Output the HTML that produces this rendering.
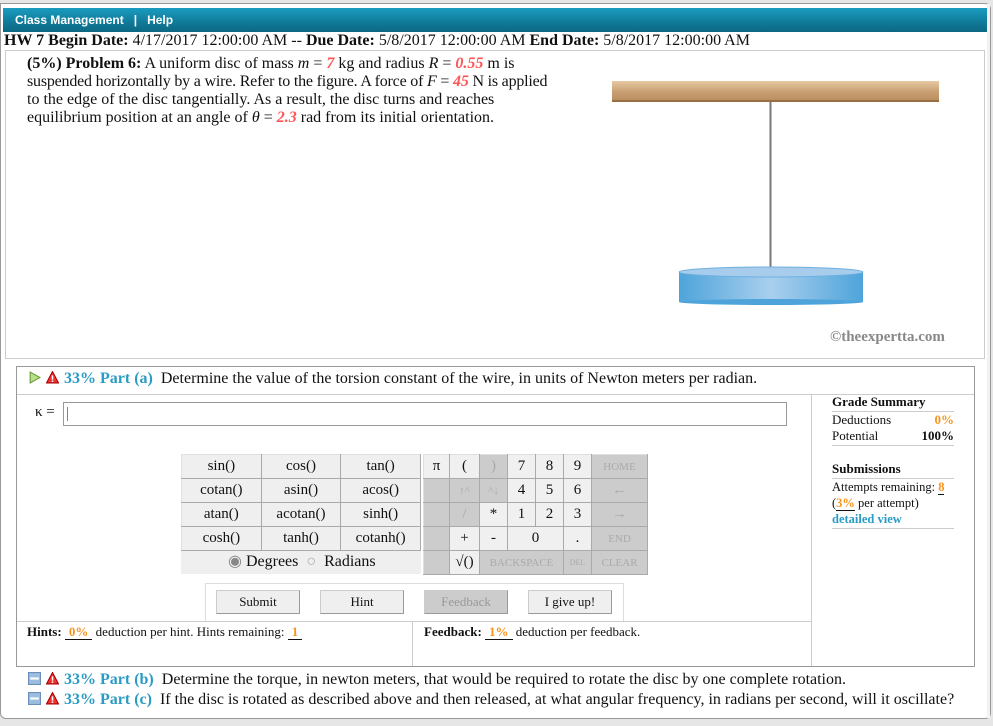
<!DOCTYPE html>
<html><head><style>
*{margin:0;padding:0;box-sizing:border-box}
body{width:993px;height:726px;background:#e6e6e6;position:relative;overflow:hidden;font-family:"Liberation Serif",serif;color:#111}
.a{position:absolute}
.frame{left:0;top:3px;width:991px;height:716px;background:#fff;border:1px solid #999;border-radius:0 6px 6px 6px}
.gut{left:987px;top:4px;width:3px;height:714px;background:#f2f2f2}
.bar{left:3px;top:8px;width:984px;height:24px;background:linear-gradient(#1a9cc0,#107a98 60%,#0d6882);color:#fff;font:bold 12px "Liberation Sans",sans-serif;padding:5px 0 0 12px}
.o{color:#f55;font-style:italic;font-weight:bold}
.tl{color:#2a9bc4;font-weight:bold}
.or{color:#f7941d;font-weight:bold}
table.c{border-collapse:collapse;position:absolute;table-layout:fixed}
table.c td{background:#efefef;border:1px solid #aaa;border-top-color:#e0e0e0;border-left-color:#e0e0e0;text-align:center;font-size:15px;height:24px;padding:0}
table.k td{background:#f0f0f0}
table.k td.g{background:#ccc;color:#aaa;font-size:11px}
.btn{position:absolute;top:590px;width:84px;height:24px;background:#efefef;border:1px solid #999;border-top-color:#ccc;border-left-color:#ccc;font-size:13px;text-align:center;line-height:22px}
.u{border-bottom:1px solid #111;padding:0 4px}
.ic{display:inline-block;width:13px;height:13px;vertical-align:-1px;margin-right:5px}
</style></head><body>
<div class="a frame"></div>
<div class="a gut"></div>
<div class="a bar">Class Management &nbsp;&nbsp;| &nbsp;&nbsp;Help</div>
<div class="a" style="left:4px;top:32px;font-size:16px;white-space:nowrap"><b>HW 7 Begin Date:</b> 4/17/2017 12:00:00 AM -- <b>Due Date:</b> 5/8/2017 12:00:00 AM <b>End Date:</b> 5/8/2017 12:00:00 AM</div>
<div class="a" style="left:5px;top:50px;width:980px;height:309px;border:1px solid #ccc"></div>
<div class="a" style="left:27px;top:55px;white-space:nowrap;font-size:16px;line-height:18px"><b>(5%) Problem 6:</b> A uniform disc of mass <i>m</i> = <span class="o">7</span> kg and radius <i>R</i> = <span class="o">0.55</span> m is<br><span style="letter-spacing:-0.2px">suspended horizontally by a wire. Refer to the figure. A force of <i>F</i> = <span class="o">45</span> N is applied</span><br>to the edge of the disc tangentially. As a result, the disc turns and reaches<br>equilibrium position at an angle of <i>θ</i> = <span class="o">2.3</span> rad from its initial orientation.</div>
<svg class="a" style="left:600px;top:60px" width="380" height="290">
<defs><linearGradient id="w" x1="0" y1="0" x2="0" y2="1"><stop offset="0" stop-color="#e6c9a3"/><stop offset=".5" stop-color="#c9a074"/><stop offset="1" stop-color="#b88a5c"/></linearGradient>
<linearGradient id="d" x1="0" x2="1"><stop offset="0" stop-color="#4ea4da"/><stop offset=".5" stop-color="#a9cfee"/><stop offset="1" stop-color="#4ea4da"/></linearGradient></defs>
<rect x="12" y="21" width="327" height="21" fill="url(#w)"/><rect x="12" y="40" width="327" height="2" fill="#9a6e45"/>
<line x1="170.5" y1="42" x2="170.5" y2="210" stroke="#777" stroke-width="2"/>
<rect x="79" y="212" width="184" height="30" fill="url(#d)"/>
<ellipse cx="171" cy="242" rx="92" ry="3" fill="#4ea4da"/>
<ellipse cx="171" cy="212" rx="92" ry="5" fill="#a8ccec" stroke="#6db0e0"/>
<text x="230" y="281" font-family="Liberation Serif" font-size="15" font-weight="bold" fill="#888">©theexpertta.com</text>
</svg>
<div class="a" style="left:16px;top:366px;width:959px;height:301px;border:1px solid #999"></div>
<div class="a" style="left:17px;top:394px;width:957px;border-top:1px solid #ccc"></div>
<div class="a" style="left:811px;top:395px;height:271px;border-left:1px solid #ccc"></div>
<div class="a" style="left:28px;top:370px;font-size:16px;white-space:nowrap"><svg class="ic" viewBox="0 0 12 12"><path d="M2 1L11 6L2 11Z" fill="#b8e08a" stroke="#6a9a3a"/></svg><svg class="ic" viewBox="0 0 12 12"><path d="M6 0.5L11.5 11H0.5Z" fill="#e33" stroke="#a00"/><rect x="5.3" y="4" width="1.4" height="4" fill="#fff"/><rect x="5.3" y="8.8" width="1.4" height="1.4" fill="#fff"/></svg><span class="tl">33% Part (a)</span>&nbsp; Determine the value of the torsion constant of the wire, in units of Newton meters per radian.</div>
<div class="a" style="left:35px;top:404px;font-size:15px">κ =</div>
<div class="a" style="left:63px;top:402px;width:724px;height:24px;border:1px solid #999"><div class="a" style="left:3px;top:4px;height:14px;border-left:1px solid #e55"></div></div>
<div class="a" style="left:832px;top:394px;width:122px;font-size:13px;line-height:16px">
<b>Grade Summary</b><div style="border-top:1px solid #ccc;margin-top:1px"></div>
<div>Deductions<span class="or" style="float:right">0%</span></div><div>Potential<b style="float:right">100%</b></div>
<div style="border-top:1px solid #ccc;margin-top:1px"></div>
<div style="height:15px"></div><b>Submissions</b><div style="border-top:1px solid #ccc;margin-top:1px"></div>
<div style="font-size:12.5px">Attempts remaining: <span class="or" style="border-bottom:1px solid #111">8</span><br>(<span class="or" style="border-bottom:1px solid #111">3%</span> per attempt)<br><span class="tl">detailed view</span></div>
<div style="border-top:1px solid #ccc;margin-top:1px"></div></div>
<div class="a" style="left:181px;top:454px;width:240px;height:120px;background:#efefef"></div>
<table class="c" style="left:181px;top:454px;width:240px">
<tr><td>sin()</td><td>cos()</td><td>tan()</td></tr>
<tr><td>cotan()</td><td>asin()</td><td>acos()</td></tr>
<tr><td>atan()</td><td>acotan()</td><td>sinh()</td></tr>
<tr><td>cosh()</td><td>tanh()</td><td>cotanh()</td></tr>
</table>
<div class="a" style="left:228px;top:551px;font-size:16px"><span style="color:#888">◉</span> Degrees &nbsp;<span style="color:#aaa">○</span> &nbsp;Radians</div>
<table class="c k" style="left:423px;top:454px;width:224px">
<col style="width:26px"><col style="width:30px"><col style="width:28px"><col style="width:28px"><col style="width:28px"><col style="width:28px"><col style="width:56px">
<tr><td>π</td><td>(</td><td class="g" style="font-size:15px">)</td><td>7</td><td>8</td><td>9</td><td class="g">HOME</td></tr>
<tr><td class="g"></td><td class="g">↑^</td><td class="g">^↓</td><td>4</td><td>5</td><td>6</td><td class="g" style="font-size:15px">←</td></tr>
<tr><td class="g"></td><td class="g" style="font-size:15px">/</td><td>*</td><td>1</td><td>2</td><td>3</td><td class="g" style="font-size:15px">→</td></tr>
<tr><td class="g"></td><td>+</td><td>-</td><td colspan="2">0</td><td>.</td><td class="g">END</td></tr>
<tr><td class="g"></td><td>√()</td><td class="g" colspan="3">BACKSPACE</td><td class="g" style="font-size:8px">DEL</td><td class="g">CLEAR</td></tr>
</table>
<div class="a" style="left:205px;top:583px;width:419px;height:38px;border:1px solid #ddd;border-bottom:none"></div>
<div class="btn" style="left:216px">Submit</div>
<div class="btn" style="left:320px">Hint</div>
<div class="btn" style="left:424px;background:#ccc;color:#999">Feedback</div>
<div class="btn" style="left:528px">I give up!</div>
<div class="a" style="left:17px;top:621px;width:794px;border-top:1px solid #ccc"></div>
<div class="a" style="left:412px;top:622px;height:44px;border-left:1px solid #ccc"></div>
<div class="a" style="left:27px;top:624px;font-size:13px"><b>Hints:</b> <span class="u or">0%</span> deduction per hint. Hints remaining: <span class="u or">1</span></div>
<div class="a" style="left:424px;top:624px;font-size:13px"><b>Feedback:</b> <span class="u or">1%</span> deduction per feedback.</div>
<div class="a" style="left:28px;top:670px;font-size:16px;line-height:20px;white-space:nowrap">
<div><svg class="ic" viewBox="0 0 12 12"><rect x=".5" y=".5" width="11" height="11" fill="#9bbde0" stroke="#6b8fb8"/><rect x="2" y="5" width="8" height="2" fill="#fff"/></svg><svg class="ic" viewBox="0 0 12 12"><path d="M6 0.5L11.5 11H0.5Z" fill="#e33" stroke="#a00"/><rect x="5.3" y="4" width="1.4" height="4" fill="#fff"/><rect x="5.3" y="8.8" width="1.4" height="1.4" fill="#fff"/></svg><span class="tl">33% Part (b)</span>&nbsp; Determine the torque, in newton meters, that would be required to rotate the disc by one complete rotation.</div>
<div><svg class="ic" viewBox="0 0 12 12"><rect x=".5" y=".5" width="11" height="11" fill="#9bbde0" stroke="#6b8fb8"/><rect x="2" y="5" width="8" height="2" fill="#fff"/></svg><svg class="ic" viewBox="0 0 12 12"><path d="M6 0.5L11.5 11H0.5Z" fill="#e33" stroke="#a00"/><rect x="5.3" y="4" width="1.4" height="4" fill="#fff"/><rect x="5.3" y="8.8" width="1.4" height="1.4" fill="#fff"/></svg><span class="tl">33% Part (c)</span>&nbsp; If the disc is rotated as described above and then released, at what angular frequency, in radians per second, will it oscillate?</div>
</div>
</body></html>
